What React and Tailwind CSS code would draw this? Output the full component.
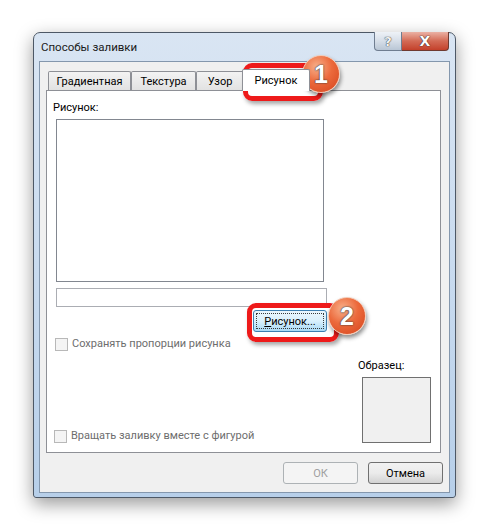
import React from 'react';

const tabs = [
  { label: 'Градиентная', w: 'w-[83px]' },
  { label: 'Текстура', w: 'w-[65px]' },
  { label: 'Узор', w: 'w-[48px]' },
];

const Checkbox = ({ label }) => (
  <div className="flex items-center h-[15px] text-[#6d6d6d]">
    <span className="w-[13px] h-[13px] border border-[#b8b8b8] bg-[#f4f4f4] shrink-0" />
    <span className="ml-[4px] whitespace-nowrap">{label}</span>
  </div>
);

const Callout = ({ n }) => (
  <div className="w-[38px] h-[38px] rounded-full border border-[#f3c9b5] bg-[radial-gradient(circle_at_38%_30%,#f8b08a_0%,#ec6a3c_45%,#d4431c_100%)] shadow-[1px_3px_4px_rgba(0,0,0,0.45)] flex items-center justify-center">
    <span className="font-['Liberation_Sans',sans-serif] font-bold text-[25px] leading-none text-white [text-shadow:0_0_1px_#3a3a3a,0_0_2px_#3a3a3a]">
      {n}
    </span>
  </div>
);

const Dialog = () => (
  <div className="w-[423px] h-[466px] rounded-t-[7px] rounded-b-[3px] border border-[#4d5866] bg-gradient-to-b from-[#d9e5f3] via-[#c9dbef] to-[#b7cfe9] shadow-[0_6px_18px_rgba(0,0,0,0.4)] flex flex-col">
    {/* title bar */}
    <div className="h-[28px] flex items-start pl-[7px] pr-[6px]">
      <span className="mt-[7px] leading-[15px] text-[#1a1a1a] text-[11.5px]">Способы заливки</span>
      <div className="ml-auto flex h-[19px] -mt-px">
        <div className="w-[28px] rounded-bl-[4px] border border-t-0 border-[#6f7d90] bg-gradient-to-b from-[#eef2f7] via-[#d6dee8] to-[#b9c6d5] flex items-center justify-center">
          <span className="font-['DejaVu_Sans',sans-serif] font-bold text-[13px] leading-none text-[#f4f4f4] [text-shadow:0_0_1px_#333,0_0_1px_#333]">?</span>
        </div>
        <div className="w-[47px] rounded-br-[4px] border border-l-0 border-t-0 border-[#6f3a30] bg-gradient-to-b from-[#eab1a4] via-[#d36a55] to-[#c3402a] flex items-center justify-center">
          <span className="font-['DejaVu_Sans',sans-serif] font-bold text-[14px] leading-none text-white [text-shadow:0_0_1px_#222,0_0_1px_#222]">X</span>
        </div>
      </div>
    </div>

    {/* client area */}
    <div className="mx-[5px] mb-[4px] flex-1 bg-[#f0f0f0] border border-[#8497ad] flex flex-col pl-[6px] pr-[6px] pt-[9px]">
      {/* tab strip */}
      <div className="h-[19px] flex items-end ml-[2px]">
        {tabs.map(t => (
          <div
            key={t.label}
            className={`${t.w} h-[19px] border border-b-0 border-[#8e9096] rounded-t-[2px] bg-gradient-to-b from-[#f3f3f3] to-[#e2e2e2] flex items-center justify-center leading-none`}
          >
            {t.label}
          </div>
        ))}
        <div className="w-[68px] h-[22px] -ml-[2px] -mb-px relative z-10 border border-b-0 border-[#8e9096] rounded-t-[2px] bg-white flex items-center justify-center leading-none">
          Рисунок
        </div>
      </div>

      {/* tab panel */}
      <div className="w-[395px] h-[363px] bg-white border border-[#8e9096] flex px-[9px] pt-[9px] pb-[8px]">
        <div className="w-[271px] flex flex-col">
          <div className="-ml-[3px] leading-[15px]">Рисунок:</div>
          <div className="mt-[4px] w-[268px] h-[163px] border border-[#828790] bg-white" />
          <div className="mt-[6px] w-[271px] h-[19px] border border-[#abadb3] bg-white" />
          <div className="mt-[3px] self-end w-[74px] h-[22px] rounded-[3px] border border-[#3c7fb1] bg-gradient-to-b from-[#eaf6fd] via-[#d9f0fc] to-[#a7d9f5] p-[2px]">
            <div className="w-full h-full border border-dotted border-[#3a3a3a] flex items-center justify-center leading-none">
              <span><span className="underline">Р</span>исунок...</span>
            </div>
          </div>
          <div className="mt-[5px] -ml-[1px]">
            <Checkbox label="Сохранять пропорции рисунка" />
          </div>
          <div className="mt-auto -ml-[2px]">
            <Checkbox label="Вращать заливку вместе с фигурой" />
          </div>
        </div>
        <div className="ml-auto flex flex-col justify-end pb-[1px]">
          <div className="-ml-[4px] leading-[15px]">Образец:</div>
          <div className="mt-[4px] w-[69px] h-[66px] border border-[#707070] bg-[#f0f0f0]" />
        </div>
      </div>

      {/* buttons */}
      <div className="mt-[9px] flex justify-end gap-[10px]">
        <div className="w-[75px] h-[22px] rounded-[3px] border border-[#adb2b5] bg-[#f4f4f4] text-[#a0a0a0] flex items-center justify-center leading-none">
          ОК
        </div>
        <div className="w-[75px] h-[22px] rounded-[3px] border border-[#707070] bg-gradient-to-b from-[#f2f2f2] via-[#ebebeb] to-[#d2d2d2] flex items-center justify-center leading-none">
          Отмена
        </div>
      </div>
    </div>
  </div>
);

export default function App() {
  return (
    <div className="w-[489px] h-[532px] bg-white relative overflow-hidden pl-[33px] pt-[32px] font-['Roboto',sans-serif] text-[11px] text-black">
      <Dialog />

      {/* highlight marks */}
      <div className="absolute left-[243px] top-[63px] w-[80px] h-[38px] rounded-[9px] border-[5px] border-[#ee1a1a] shadow-[2px_3px_4px_rgba(0,0,0,0.35)]" />
      <div className="absolute left-[302px] top-[55px]">
        <Callout n="1" />
      </div>
      <div className="absolute left-[247px] top-[303px] w-[92px] h-[39px] rounded-[9px] border-[5px] border-[#ee1a1a] shadow-[2px_3px_4px_rgba(0,0,0,0.35)]" />
      <div className="absolute left-[328px] top-[297px]">
        <Callout n="2" />
      </div>
    </div>
  );
}
